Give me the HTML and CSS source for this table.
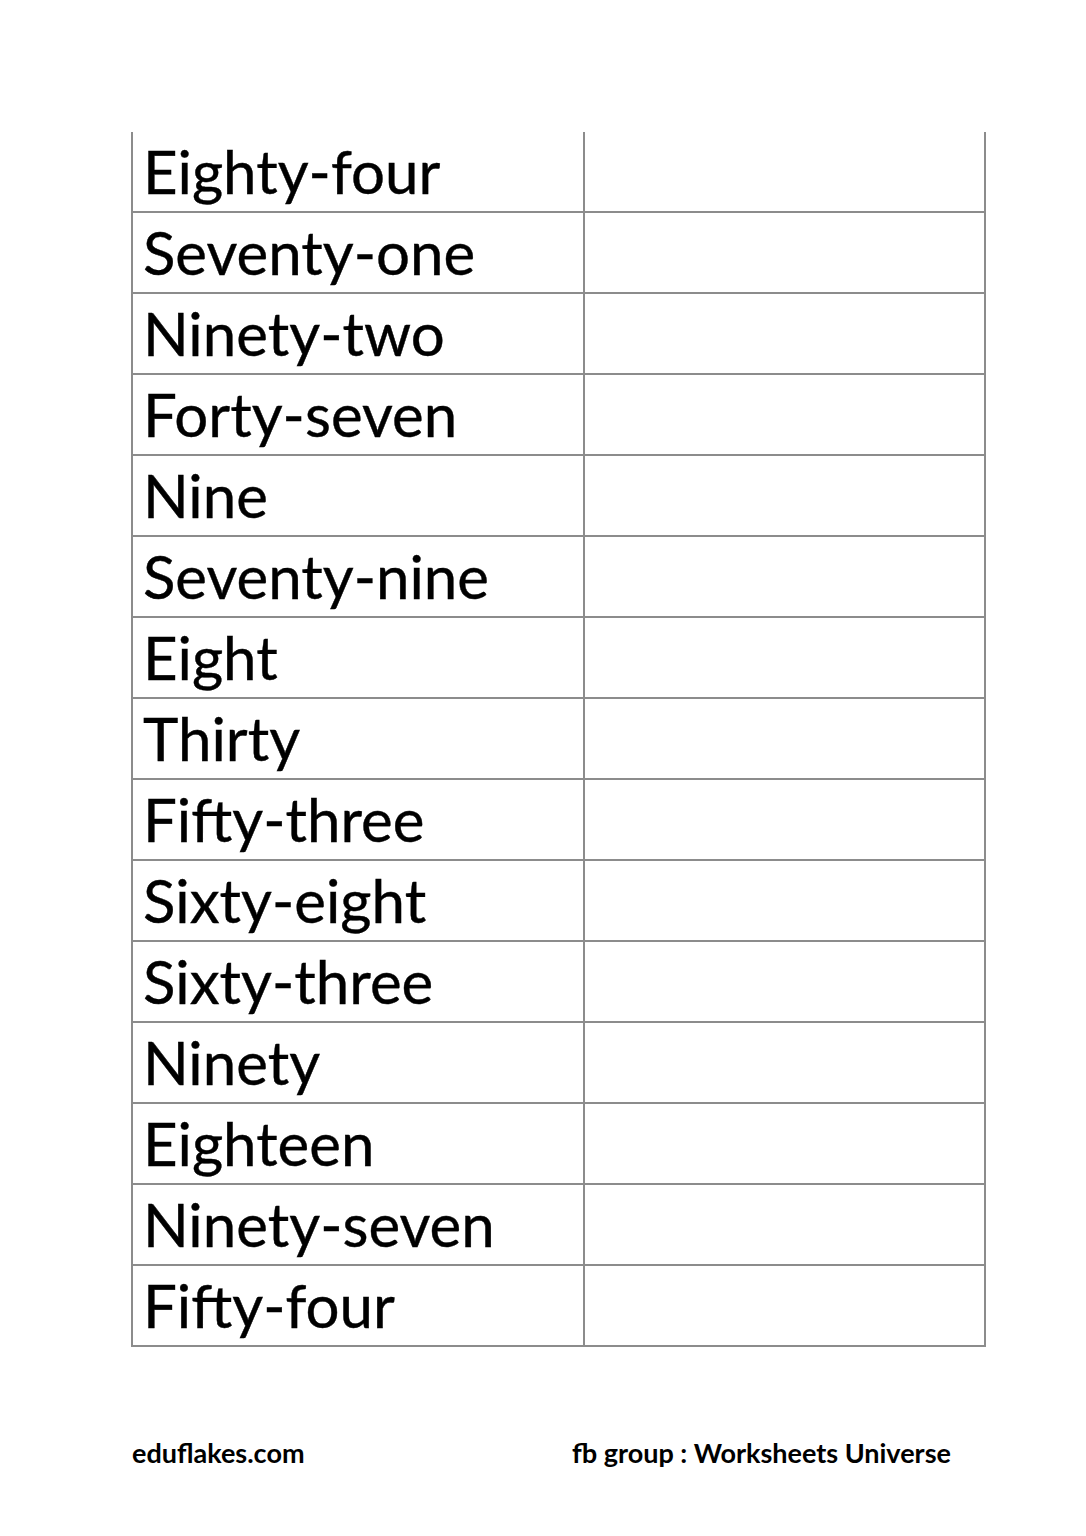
FILE: index.html
```html
<!DOCTYPE html>
<html lang="en">
<head>
<meta charset="utf-8">
<title>Numbers worksheet</title>
<link rel="stylesheet" href="styles.css">
</head>
<body>
<main class="page">
  <div class="sheet">
    <div class="cell word">Eighty-four</div><div class="cell blank"></div>
    <div class="cell word">Seventy-one</div><div class="cell blank"></div>
    <div class="cell word">Ninety-two</div><div class="cell blank"></div>
    <div class="cell word">Forty-seven</div><div class="cell blank"></div>
    <div class="cell word">Nine</div><div class="cell blank"></div>
    <div class="cell word">Seventy-nine</div><div class="cell blank"></div>
    <div class="cell word">Eight</div><div class="cell blank"></div>
    <div class="cell word">Thirty</div><div class="cell blank"></div>
    <div class="cell word">Fifty-three</div><div class="cell blank"></div>
    <div class="cell word">Sixty-eight</div><div class="cell blank"></div>
    <div class="cell word">Sixty-three</div><div class="cell blank"></div>
    <div class="cell word">Ninety</div><div class="cell blank"></div>
    <div class="cell word">Eighteen</div><div class="cell blank"></div>
    <div class="cell word">Ninety-seven</div><div class="cell blank"></div>
    <div class="cell word">Fifty-four</div><div class="cell blank"></div>
  </div>
  <footer class="footer">
    <span class="site">eduflakes.com</span>
    <span class="group">fb group : Worksheets Universe</span>
  </footer>
</main>
</body>
</html>
```

FILE: styles.css
```css
html, body {
  margin: 0;
  padding: 0;
  background: #ffffff;
}

.page {
  width: 1086px;
  height: 1536px;
  box-sizing: border-box;
  padding: 132px 0 0 131px;
  font-family: Lato, "Open Sans", sans-serif;
  color: #000;
}

.sheet {
  display: grid;
  grid-template-columns: 454px 401px;
  grid-auto-rows: 81px;
}

.cell {
  box-sizing: border-box;
  border-bottom: 2px solid #8c8c8c;
  border-right: 2px solid #8c8c8c;
}

.word {
  border-left: 2px solid #8c8c8c;
  padding: 9px 0 0 10px;
  font-size: 60px;
  line-height: 1;
  white-space: nowrap;
  -webkit-text-stroke: 0.4px #000;
}

.footer {
  display: flex;
  margin-top: 92px;
  padding-left: 1px;
  font-weight: 700;
  font-size: 27px;
  line-height: 1;
}

.site {
  width: 440px;
}
```
